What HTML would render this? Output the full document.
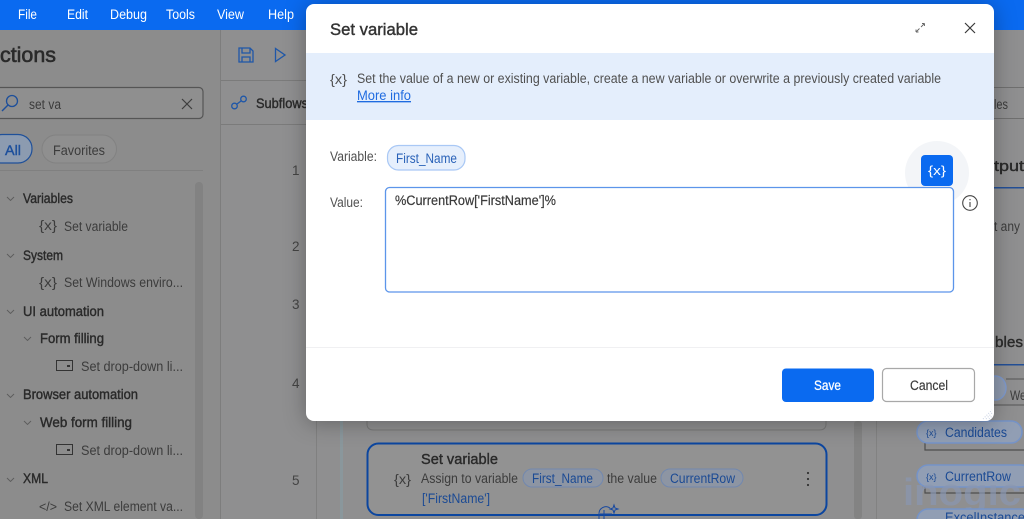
<!DOCTYPE html>
<html><head><meta charset="utf-8"><title>Set variable</title>
<style>
html,body{margin:0;padding:0;width:1024px;height:519px;overflow:hidden;background:#8f8f8f}
svg{display:block}
text{font-family:"Liberation Sans",sans-serif;font-size:13.5px;fill:#2c2c2c;white-space:pre}
.d{fill:#2a2a2a}
.g{fill:#3c3c3c}
.b{stroke:#2a2a2a;stroke-width:.4}
.w{fill:#fff}
.bl{fill:#1b4a94}
.m{fill:#444}
.t{fill:#505050}
</style></head><body>
<svg width="1024" height="519" viewBox="0 0 1024 519" xmlns="http://www.w3.org/2000/svg">
<defs>
<filter id="sh" x="-10%" y="-15%" width="120%" height="130%" color-interpolation-filters="sRGB"><feDropShadow dx="0" dy="2" stdDeviation="11" flood-color="#000" flood-opacity=".3"/></filter>
<filter id="soft" color-interpolation-filters="sRGB"><feGaussianBlur stdDeviation="0.3"/></filter>
</defs>
<g filter="url(#soft)">
<!-- base -->
<rect width="1024" height="519" fill="#8c8c8c"/>
<rect x="221" y="30" width="803" height="489" fill="#8f8f90"/>
<rect y="0" width="1024" height="30" fill="#0a6af0"/>
<!-- menu -->
<text class="w" x="18" y="19" textLength="19" lengthAdjust="spacingAndGlyphs">File</text>
<text class="w" x="67" y="19" textLength="21" lengthAdjust="spacingAndGlyphs">Edit</text>
<text class="w" x="110" y="19" textLength="37" lengthAdjust="spacingAndGlyphs">Debug</text>
<text class="w" x="166" y="19" textLength="29" lengthAdjust="spacingAndGlyphs">Tools</text>
<text class="w" x="217" y="19" textLength="27" lengthAdjust="spacingAndGlyphs">View</text>
<text class="w" x="268" y="19" textLength="26" lengthAdjust="spacingAndGlyphs">Help</text>
<!-- left panel -->
<rect x="220" y="30" width="1" height="489" fill="#7d7d7d"/>
<text class="d b" x="0" y="62" style="font-size:21px;stroke-width:.6" textLength="56" lengthAdjust="spacingAndGlyphs">ctions</text>
<rect x="-6" y="87.500" width="209" height="31" rx="4" fill="#8f8f8f" stroke="#555" stroke-width="1.200"/>
<circle cx="12" cy="101" r="5.500" fill="none" stroke="#1d4f9a" stroke-width="1.300"/>
<path d="M8 105 L2 111" stroke="#1d4f9a" stroke-width="1.400"/>
<text class="g" x="29" y="109" textLength="32" lengthAdjust="spacingAndGlyphs">set va</text>
<path d="M182 99 L192 109 M192 99 L182 109" stroke="#3d3d3d" stroke-width="1.200"/>
<rect x="-12" y="134.500" width="44" height="28.500" rx="14" fill="#8c9bb0" stroke="#1f5099" stroke-width="1.200"/>
<text class="b" x="5" y="155" style="fill:#1c4f9c;stroke:#1c4f9c" textLength="16" lengthAdjust="spacingAndGlyphs">All</text>
<rect x="42" y="135" width="74.500" height="28" rx="14" fill="#8f8f8f" stroke="#828282"/>
<text class="g" x="53" y="155" textLength="52" lengthAdjust="spacingAndGlyphs">Favorites</text>
<rect x="0" y="170" width="203" height="1" fill="#808080"/>
<rect x="195" y="182" width="8" height="337" rx="4" fill="#828282"/>
<g fill="none" stroke="#5c5c5c" stroke-width=".9">
<path d="M7 197 L10.500 200.500 L14 197M7 254 L10.500 257.500 L14 254M7 310 L10.500 313.500 L14 310M24 337 L27.500 340.500 L31 337M7 394 L10.500 397.500 L14 394M24 421 L27.500 424.500 L31 421M7 478 L10.500 481.500 L14 478"/>
</g>
<g fill="none" stroke="#333" stroke-width="1">
<rect x="56.500" y="360.500" width="16" height="10" /><rect x="56.500" y="444.500" width="16" height="10"/>
</g>
<rect x="67" y="365" width="3" height="2" fill="#333"/><rect x="67" y="449" width="3" height="2" fill="#333"/>
<text class="d b" x="23" y="203" textLength="50" lengthAdjust="spacingAndGlyphs">Variables</text>
<text class="g" x="39" y="230" style="font-size:14px" textLength="18" lengthAdjust="spacingAndGlyphs">{x}</text>
<text class="g" x="64" y="231" textLength="64" lengthAdjust="spacingAndGlyphs">Set variable</text>
<text class="d b" x="23" y="260" textLength="40" lengthAdjust="spacingAndGlyphs">System</text>
<text class="g" x="39" y="287" style="font-size:14px" textLength="18" lengthAdjust="spacingAndGlyphs">{x}</text>
<text class="g" x="64" y="287" textLength="119" lengthAdjust="spacingAndGlyphs">Set Windows enviro...</text>
<text class="d b" x="23" y="316" textLength="81" lengthAdjust="spacingAndGlyphs">UI automation</text>
<text class="d b" x="40" y="343" textLength="64" lengthAdjust="spacingAndGlyphs">Form filling</text>
<text class="g" x="81" y="371" textLength="102" lengthAdjust="spacingAndGlyphs">Set drop-down li...</text>
<text class="d b" x="23" y="399" textLength="115" lengthAdjust="spacingAndGlyphs">Browser automation</text>
<text class="d b" x="40" y="427" textLength="92" lengthAdjust="spacingAndGlyphs">Web form filling</text>
<text class="g" x="81" y="455" textLength="102" lengthAdjust="spacingAndGlyphs">Set drop-down li...</text>
<text class="d b" x="23" y="483" textLength="25" lengthAdjust="spacingAndGlyphs">XML</text>
<text class="g" x="39" y="511" style="font-size:13px" textLength="18" lengthAdjust="spacingAndGlyphs">&lt;/&gt;</text>
<text class="g" x="64" y="511" textLength="119" lengthAdjust="spacingAndGlyphs">Set XML element va...</text>
<!-- toolbar -->
<path d="M239 48 H250 L253 51 V62 H239 Z M242 48 V53 H250 V48 M242 62 V57 H250 V62" fill="none" stroke="#1f57a8" stroke-width="1.300"/>
<path d="M275.500 48.500 V61.500 L285 55 Z" fill="none" stroke="#1f57a8" stroke-width="1.300"/>
<rect x="221" y="80" width="90" height="1" fill="#7b7b7b"/>
<rect x="221" y="124" width="90" height="1" fill="#7b7b7b"/>
<circle cx="234.500" cy="106" r="2.800" fill="none" stroke="#1f57a8" stroke-width="1.300"/>
<circle cx="243.500" cy="99" r="2.800" fill="none" stroke="#1f57a8" stroke-width="1.300"/>
<path d="M237 104 L241 101" stroke="#1f57a8" stroke-width="1.300"/>
<text class="d b" x="256" y="108" textLength="52" lengthAdjust="spacingAndGlyphs">Subflows</text>
<!-- line numbers -->
<text class="m" x="292" y="175">1</text>
<text class="m" x="292" y="251">2</text>
<text class="m" x="292" y="309">3</text>
<text class="m" x="292" y="388">4</text>
<text class="m" x="292" y="485">5</text>
<!-- canvas + scrollbar -->
<rect x="316" y="421" width="1" height="98" fill="#808080"/>
<rect x="340" y="421" width="3" height="98" fill="#8a979c"/>
<rect x="854" y="421" width="8" height="98" rx="3" fill="#838383"/>
<rect x="876" y="30" width="1" height="489" fill="#828282"/>
<path d="M367 421 V424 Q367 430 374 430 H819 Q826 430 826 424 V421" fill="none" stroke="#787878"/>
<!-- Card -->
<rect x="367.500" y="443.500" width="459" height="71.500" rx="11" fill="#929292" stroke="#0c469f" stroke-width="2"/>
<text class="d b" x="421" y="464" style="font-size:14.500px" textLength="77" lengthAdjust="spacingAndGlyphs">Set variable</text>
<text class="g" x="394" y="484" style="font-size:14px" textLength="17" lengthAdjust="spacingAndGlyphs">{x}</text>
<text class="g" x="421" y="483" textLength="97" lengthAdjust="spacingAndGlyphs">Assign to variable</text>
<rect x="523" y="469" width="80" height="18" rx="9" fill="#8d95a3" stroke="#7288ae"/>
<text class="bl" x="532" y="483" textLength="61" lengthAdjust="spacingAndGlyphs">First_Name</text>
<text class="g" x="607" y="483" textLength="50" lengthAdjust="spacingAndGlyphs">the value</text>
<rect x="661" y="469" width="82" height="18" rx="9" fill="#8d95a3" stroke="#7288ae"/>
<text class="bl" x="670" y="483" textLength="65" lengthAdjust="spacingAndGlyphs">CurrentRow</text>
<text class="bl" x="422" y="503" textLength="68" lengthAdjust="spacingAndGlyphs">['FirstName']</text>
<circle cx="808" cy="473" r="1.100" fill="#333"/><circle cx="808" cy="479" r="1.100" fill="#333"/><circle cx="808" cy="485" r="1.100" fill="#333"/>
<path d="M599 519 V514 A7 7 0 0 1 610 508 M604 510 V519 M600 514 H612 M613 508 L614 505 L615 508 L618 509 L615 510 L614 513 L613 510 L610 509 Z" fill="none" stroke="#1748a0" stroke-width="1"/>
<!-- right panel -->
<rect x="994" y="87" width="30" height="1" fill="#6f6f6f"/>
<rect x="994" y="118" width="30" height="1" fill="#6f6f6f"/>
<text class="g" x="994" y="109" textLength="14" lengthAdjust="spacingAndGlyphs">les</text>
<text class="d b" x="994" y="171" style="font-size:15px" textLength="30" lengthAdjust="spacingAndGlyphs">tput</text>
<rect x="994" y="187" width="30" height="1.500" fill="#234f96"/>
<text class="g" x="994" y="231" textLength="26" lengthAdjust="spacingAndGlyphs">t any</text>
<text class="d b" x="995" y="347" style="font-size:15px" textLength="28" lengthAdjust="spacingAndGlyphs">bles</text>
<rect x="994" y="364" width="30" height="1.500" fill="#234f96"/>
<rect x="985" y="376" width="21" height="24" rx="12" fill="#8f9bb0" stroke="#7f9acb" stroke-width="1.500"/>
<path d="M1006 379 H1024 M925 405 H1024" stroke="#555"/>
<text class="g" x="1010" y="400" textLength="16" lengthAdjust="spacingAndGlyphs">We</text>
<!-- chips -->
<path d="M925 440 V450 H1024 M925 484 V493 H1024" fill="none" stroke="#4d4d4d" stroke-width="1.200"/>
<rect x="917" y="421" width="105" height="22" rx="11" fill="#919eb4" stroke="#7593c8" stroke-width="1.500"/>
<text class="bl" x="926" y="436" style="font-size:9px">{x}</text>
<text class="bl" x="945" y="437" textLength="62" lengthAdjust="spacingAndGlyphs">Candidates</text>
<rect x="917" y="465" width="115" height="22" rx="11" fill="#919eb4" stroke="#7593c8" stroke-width="1.500"/>
<text class="bl" x="926" y="480" style="font-size:9px">{x}</text>
<text x="903" y="505" style="font-size:38px;font-weight:bold;fill:#8a97b2;opacity:.7" textLength="118" lengthAdjust="spacingAndGlyphs">inogic</text>
<text class="bl" x="945" y="481" textLength="66" lengthAdjust="spacingAndGlyphs">CurrentRow</text>
<rect x="917" y="509" width="115" height="22" rx="11" fill="#919eb4" stroke="#7593c8" stroke-width="1.500"/>
<text class="bl" x="945" y="522" textLength="80" lengthAdjust="spacingAndGlyphs">ExcelInstance</text>
<!-- modal -->
<rect x="306" y="4" width="688" height="417" rx="8" fill="#fff" filter="url(#sh)"/>
<rect x="306" y="53" width="688" height="67" fill="#e4eefc"/>
<text x="330" y="35" class="b" style="font-size:16.500px;fill:#333;stroke:#333" textLength="88" lengthAdjust="spacingAndGlyphs">Set variable</text>
<path d="M916 32 L919.500 28.500 M924.500 23.500 L921 27 M916 32 V29.500 M916 32 H918.500 M924.500 23.500 V26 M924.500 23.500 H922" stroke="#666" stroke-width=".9" fill="none"/>
<path d="M965 23 L975 33 M975 23 L965 33" stroke="#3a3a3a" stroke-width="1.200"/>
<text class="t" x="330" y="84" style="font-size:14px" textLength="17" lengthAdjust="spacingAndGlyphs">{x}</text>
<text class="t" x="357" y="83" textLength="584" lengthAdjust="spacingAndGlyphs">Set the value of a new or existing variable, create a new variable or overwrite a previously created variable</text>
<text x="357" y="100" style="fill:#1f6be0;text-decoration:underline" textLength="54" lengthAdjust="spacingAndGlyphs">More info</text>
<text class="t" x="330" y="161" textLength="47" lengthAdjust="spacingAndGlyphs">Variable:</text>
<rect x="387.500" y="145.500" width="77.500" height="24.500" rx="11" fill="#e6effc" stroke="#a9c8f5" stroke-width="1.200"/>
<text x="396" y="163" style="fill:#2a62b8" textLength="61" lengthAdjust="spacingAndGlyphs">First_Name</text>
<text class="t" x="330" y="207" textLength="33" lengthAdjust="spacingAndGlyphs">Value:</text>
<circle cx="937" cy="173" r="32" fill="#f3f5f8"/>
<rect x="385.500" y="187.500" width="568" height="104.500" rx="4" fill="#fff" stroke="#5c95ea" stroke-width="1.300"/>
<rect x="921" y="155" width="32" height="31" rx="4" fill="#0a6af0"/>
<text class="w" x="928" y="175" style="font-size:13px" textLength="18" lengthAdjust="spacingAndGlyphs">{x}</text>
<text x="395" y="205" style="fill:#3a3a3a;stroke:#3a3a3a;stroke-width:.2" textLength="161" lengthAdjust="spacingAndGlyphs">%CurrentRow['FirstName']%</text>
<circle cx="970" cy="203" r="7.300" fill="none" stroke="#444" stroke-width="1.100"/>
<path d="M970 202 V207 M970 199 V200.200" stroke="#444" stroke-width="1.100"/>
<rect x="306" y="347" width="688" height="1" fill="#f0f0f2"/>
<rect x="782" y="368.500" width="92" height="33.500" rx="4" fill="#0a6af0"/>
<text class="w" x="814" y="390" style="stroke:#fff;stroke-width:.25" textLength="27" lengthAdjust="spacingAndGlyphs">Save</text>
<rect x="882.500" y="368.500" width="92" height="33" rx="4" fill="#fff" stroke="#a8a8a8" stroke-width="1.200"/>
<text x="910" y="390" style="fill:#3a3a3a;stroke:#3a3a3a;stroke-width:.15" textLength="38" lengthAdjust="spacingAndGlyphs">Cancel</text>
<path d="M986 419 L992 413 M989 419 L992 416 M983 419 L992 410" stroke="#c9d2e4" stroke-dasharray="1 1.500"/>
</g>
</svg>
</body></html>
